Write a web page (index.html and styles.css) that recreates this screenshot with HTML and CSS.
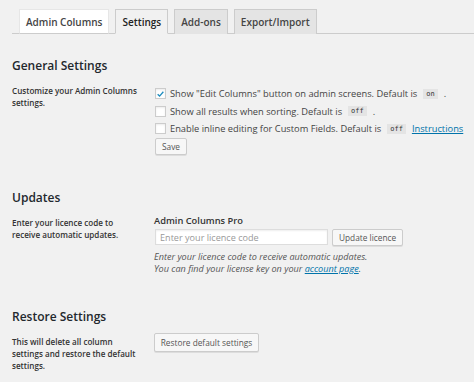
FILE: index.html
```html
<!DOCTYPE html>
<html lang="en">
<head>
    <meta charset="UTF-8">
    <meta name="viewport" content="width=device-width, initial-scale=1.0">
    <title>Admin Columns Settings</title>
    <link rel="stylesheet" href="styles.css">
</head>
<body>
    <div class="wrap">
        <nav class="tabs">
            <a class="tab tab-white" href="#">Admin Columns</a>
            <a class="tab tab-active" href="#">Settings</a>
            <a class="tab" href="#">Add-ons</a>
            <a class="tab" href="#">Export/Import</a>
        </nav>

        <section class="section section-general">
            <h2>General Settings</h2>
            <div class="row">
                <div class="desc">Customize your Admin Columns settings.</div>
                <div class="fields">
                    <label class="check-row">
                        <span class="checkbox">
                            <svg viewBox="0 0 12 12" width="10" height="10"><path d="M2.2 6.3 L4.8 8.8 L9.8 3" fill="none" stroke="#1e8cbe" stroke-width="1.8"/></svg>
                        </span>
                        Show "Edit Columns" button on admin screens. Default is <code>on</code>.
                    </label>
                    <label class="check-row">
                        <span class="checkbox"></span>
                        Show all results when sorting. Default is <code>off</code>.
                    </label>
                    <label class="check-row">
                        <span class="checkbox"></span>
                        Enable inline editing for Custom Fields. Default is <code>off</code> <a class="link" href="#">Instructions</a>
                    </label>
                    <button class="btn btn-save">Save</button>
                </div>
            </div>
        </section>

        <section class="section section-updates">
            <h2>Updates</h2>
            <div class="row">
                <div class="desc">Enter your licence code to receive automatic updates.</div>
                <div class="fields">
                    <div class="field-title">Admin Columns Pro</div>
                    <div class="licence">
                        <input class="input" type="text" placeholder="Enter your licence code">
                        <button class="btn">Update licence</button>
                    </div>
                    <p class="note">Enter your licence code to receive automatic updates.<br>
                    You can find your license key on your <a class="link" href="#">account page</a>.</p>
                </div>
            </div>
        </section>

        <section class="section section-restore">
            <h2>Restore Settings</h2>
            <div class="row">
                <div class="desc">This will delete all column settings and restore the default settings.</div>
                <div class="fields">
                    <button class="btn btn-restore">Restore default settings</button>
                </div>
            </div>
        </section>
    </div>
</body>
</html>
```

FILE: styles.css
```css
body {
    margin: 0;
    padding: 0;
    background: #f1f1f1;
    font-family: 'Open Sans', 'Liberation Sans', sans-serif;
    font-size: 9.3px;
    color: #444;
    overflow: hidden;
}
.wrap {
    padding: 9px 0 0 12px;
}
.tabs {
    display: flex;
    gap: 6px;
    padding-left: 7px;
    border-bottom: 1px solid #ccc;
    height: 24px;
}
.tab {
    display: block;
    box-sizing: border-box;
    height: 25px;
    padding: 0 6px;
    line-height: 24px;
    font-size: 10px;
    font-weight: 600;
    color: #444;
    text-decoration: none;
    background: #e4e4e4;
    border: 1px solid #ccc;
    border-bottom: none;
}
.tab-white {
    background: #fff;
    border-color: #e6e6e6;
    border-bottom: 1px solid #ccc;
}
.tab-active {
    background: #f1f1f1;
    color: #222;
    border-bottom: 1px solid #f1f1f1;
}
.section h2 {
    margin: 0;
    font-size: 12px;
    font-weight: 600;
    color: #23282d;
    line-height: 18px;
}
.section-general {
    margin-top: 23px;
}
.section-updates {
    margin-top: 34px;
}
.section-restore {
    margin-top: 32px;
}
.row {
    display: flex;
    margin-top: 10px;
}
.desc {
    width: 142px;
    flex-shrink: 0;
    font-size: 8.1px;
    font-weight: 600;
    color: #333;
    line-height: 12px;
    padding-right: 13px;
    box-sizing: border-box;
}
.fields {
    flex: 1;
}
.check-row {
    display: flex;
    align-items: center;
    gap: 4px;
    height: 17.5px;
    white-space: nowrap;
}
.checkbox {
    display: inline-flex;
    align-items: center;
    justify-content: center;
    box-sizing: border-box;
    width: 11px;
    height: 11px;
    margin-left: 1px;
    background: #fff;
    border: 1px solid #ccc;
    box-shadow: inset 0 1px 2px rgba(0, 0, 0, 0.08);
}
code {
    font-family: 'DejaVu Sans Mono', 'Liberation Mono', monospace;
    font-size: 7px;
    background: #e4e4e4;
    padding: 1px 3px;
    margin: 0 2px;
    color: #333;
}
.link {
    color: #0073aa;
    text-decoration: underline;
}
.btn {
    font-family: 'Open Sans', 'Liberation Sans', sans-serif;
    font-size: 8.3px;
    color: #555;
    background: #f7f7f7;
    border: 1px solid #ccc;
    border-radius: 2px;
    box-shadow: 0 1px 0 #ddd;
    height: 17px;
    padding: 0 6px;
    cursor: pointer;
}
.btn-save {
    margin-top: 0;
    margin-left: 1px;
    width: 32px;
    padding: 0;
}
.field-title {
    font-weight: 600;
    color: #333;
    line-height: 12px;
    margin-top: -2px;
}
.licence {
    display: flex;
    gap: 4px;
    margin-top: 2px;
    align-items: center;
}
.input {
    box-sizing: border-box;
    width: 173px;
    height: 16px;
    margin: 0 0 0 1px;
    padding: 0 4px;
    font-family: 'Open Sans', 'Liberation Sans', sans-serif;
    font-size: 9.1px;
    background: #fff;
    border: 1px solid #ddd;
    box-shadow: inset 0 1px 2px rgba(0, 0, 0, 0.07);
}
.input::placeholder {
    color: #999;
}
.btn-restore {
    height: 19px;
    margin-top: -6px;
    width: 105px;
    padding: 0;
}
.note {
    margin: 5px 0 0;
    font-size: 9.1px;
    font-style: italic;
    color: #555;
    line-height: 12.5px;
}
```
